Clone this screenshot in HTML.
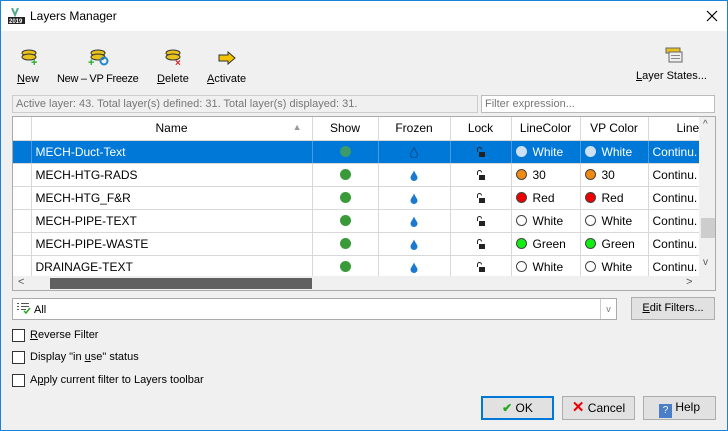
<!DOCTYPE html>
<html><head><style>
*{box-sizing:border-box;margin:0;padding:0}
body{width:728px;height:431px;overflow:hidden;font-family:"Liberation Sans",sans-serif;font-size:12px;color:#000;background:#f0f0f0;position:relative}
.a{position:absolute}
.win{left:0;top:0;width:728px;height:431px;border:1px solid #1883d7}
.title{left:1px;top:1px;width:726px;height:30px;background:#fff}
.tb{font-size:11px;text-align:center}
table{border-collapse:collapse;table-layout:fixed}
td,th{height:23px;border-right:1px solid #d8d8d8;border-bottom:1px solid #d8d8d8;font-weight:normal;white-space:nowrap;overflow:hidden;font-size:12px}
th{background:#fff;text-align:center}
td{padding-left:4px}
.c{text-align:center;padding:0}
td svg{vertical-align:-2px}
tr.sel td{background:#0078d7;color:#fff;border-right-color:#4a9be0}
.dot{display:inline-block;width:11px;height:11px;border-radius:50%;vertical-align:-1px;margin-right:6px;border:1px solid #444}
.g{display:inline-block;width:11px;height:11px;border-radius:50%;background:#3a9a3a;vertical-align:-1px}
.cb{width:13px;height:13px;border:1px solid #333;background:#fff}
.btn{border:1px solid #adadad;background:#e1e1e1;text-align:center;line-height:21px;font-size:12px}
</style></head><body>
<div class="a win"></div>
<div class="a title"></div>
<div class="a" style="left:8px;top:8px;width:17px;height:16px"><svg width="17" height="16"><path d="M4 0l3 7 3-7" stroke="#5a8" stroke-width="2" fill="none"/><rect x="0" y="9" width="17" height="7" fill="#222"/><text x="1" y="15" font-size="6" fill="#fff" font-family="Liberation Sans" font-weight="bold">2019</text></svg></div>
<div class="a" style="left:30px;top:9px;font-size:12px">Layers Manager</div>
<svg class="a" style="left:706px;top:10px" width="12" height="12"><path d="M1 1l10 10M11 1L1 11" stroke="#000" stroke-width="1.2"/></svg>

<svg class="a" style="left:20px;top:48px" width="20" height="18"><ellipse cx="9" cy="5" rx="7" ry="3" fill="#e8c21a" stroke="#333"/><ellipse cx="9" cy="9" rx="7" ry="3" fill="#e8c21a" stroke="#333"/><text x="11" y="18" fill="#2a2" font-size="11" font-weight="bold">+</text></svg>
<div class="a tb" style="left:17px;top:73px"><u>N</u>ew</div>
<svg class="a" style="left:88px;top:48px" width="22" height="18"><ellipse cx="10" cy="5" rx="7" ry="3" fill="#e8c21a" stroke="#333"/><ellipse cx="10" cy="9" rx="7" ry="3" fill="#e8c21a" stroke="#333"/><text x="0" y="18" fill="#2a2" font-size="11" font-weight="bold">+</text><circle cx="16" cy="13" r="3.5" fill="none" stroke="#28c" stroke-width="2"/></svg>
<div class="a tb" style="left:57px;top:73px;letter-spacing:-0.3px">New – VP Freeze</div>
<svg class="a" style="left:164px;top:48px" width="20" height="18"><ellipse cx="9" cy="5" rx="7" ry="3" fill="#e8c21a" stroke="#333"/><ellipse cx="9" cy="9" rx="7" ry="3" fill="#e8c21a" stroke="#333"/><text x="11" y="18" fill="#d22" font-size="10" font-weight="bold">×</text></svg>
<div class="a tb" style="left:157px;top:73px"><u>D</u>elete</div>
<svg class="a" style="left:218px;top:51px" width="19" height="14"><path d="M1 4h9V1l7 6-7 6V10H1z" fill="#f5c400" stroke="#333"/></svg>
<div class="a tb" style="left:207px;top:73px"><u>A</u>ctivate</div>
<svg class="a" style="left:664px;top:47px" width="20" height="16"><rect x="2" y="1" width="14" height="5" fill="#e8c21a" stroke="#666"/><rect x="5" y="5" width="13" height="10" fill="#eee" stroke="#666"/><rect x="7" y="8" width="9" height="1" fill="#888"/><rect x="7" y="11" width="9" height="1" fill="#888"/></svg>
<div class="a tb" style="left:636px;top:70px"><u>L</u>ayer States...</div>

<div class="a" style="left:12px;top:95px;width:466px;height:18px;border:1px solid #ccc;background:#f0f0f0;color:#777;font-size:11px;padding:2px 3px">Active layer: 43. Total layer(s) defined: 31. Total layer(s) displayed: 31.</div>
<div class="a" style="left:481px;top:95px;width:234px;height:18px;border:1px solid #bbb;background:#fff;color:#777;font-size:11px;padding:2px 3px">Filter expression...</div>

<div class="a" style="left:12px;top:116px;width:704px;height:175px;border:1px solid #aaa;background:#fff;overflow:hidden">
<table style="width:686px">
<colgroup><col style="width:18px"><col style="width:281px"><col style="width:66px"><col style="width:72px"><col style="width:61px"><col style="width:69px"><col style="width:68px"><col style="width:51px"></colgroup>
<tr><th></th><th style="position:relative">Name<span style="position:absolute;right:10px;top:5px;color:#999;font-size:9px">▲</span></th><th>Show</th><th>Frozen</th><th>Lock</th><th>LineColor</th><th>VP Color</th><th style="text-align:left;padding-left:28px">LineS</th></tr>
<tr class="sel"><td></td><td>MECH-Duct-Text</td><td class="c"><span class="g" style="background:#3c9a6a"></span></td><td class="c"><svg width="8" height="11"><path d="M4 0.5C2.5 4 0.5 6 0.5 7.5a3.5 3.5 0 007 0C7.5 6 5.5 4 4 0.5z" fill="none" stroke="#0a4f8f"/></svg></td><td class="c"><svg width="9" height="11"><path d="M1.5 5V2.5a2 2 0 014 0" fill="none" stroke="#222"/><rect x="3" y="5" width="6" height="5" fill="#222"/></svg></td><td><span class="dot" style="background:#cfe0f2;border-color:#cfe0f2"></span>White</td><td><span class="dot" style="background:#cfe0f2;border-color:#cfe0f2"></span>White</td><td>Continu.</td></tr>
<tr><td></td><td>MECH-HTG-RADS</td><td class="c"><span class="g"></span></td><td class="c"><svg width="8" height="11"><path d="M4 0.5C2.5 4 0.5 6 0.5 7.5a3.5 3.5 0 007 0C7.5 6 5.5 4 4 0.5z" fill="#1b7ad0"/></svg></td><td class="c"><svg width="9" height="11"><path d="M1.5 5V2.5a2 2 0 014 0" fill="none" stroke="#222"/><rect x="3" y="5" width="6" height="5" fill="#222"/></svg></td><td><span class="dot" style="background:#f08a10"></span>30</td><td><span class="dot" style="background:#f08a10"></span>30</td><td>Continu.</td></tr>
<tr><td></td><td>MECH-HTG_F&amp;R</td><td class="c"><span class="g"></span></td><td class="c"><svg width="8" height="11"><path d="M4 0.5C2.5 4 0.5 6 0.5 7.5a3.5 3.5 0 007 0C7.5 6 5.5 4 4 0.5z" fill="#1b7ad0"/></svg></td><td class="c"><svg width="9" height="11"><path d="M1.5 5V2.5a2 2 0 014 0" fill="none" stroke="#222"/><rect x="3" y="5" width="6" height="5" fill="#222"/></svg></td><td><span class="dot" style="background:#e00"></span>Red</td><td><span class="dot" style="background:#e00"></span>Red</td><td>Continu.</td></tr>
<tr><td></td><td>MECH-PIPE-TEXT</td><td class="c"><span class="g"></span></td><td class="c"><svg width="8" height="11"><path d="M4 0.5C2.5 4 0.5 6 0.5 7.5a3.5 3.5 0 007 0C7.5 6 5.5 4 4 0.5z" fill="#1b7ad0"/></svg></td><td class="c"><svg width="9" height="11"><path d="M1.5 5V2.5a2 2 0 014 0" fill="none" stroke="#222"/><rect x="3" y="5" width="6" height="5" fill="#222"/></svg></td><td><span class="dot" style="background:#fff"></span>White</td><td><span class="dot" style="background:#fff"></span>White</td><td>Continu.</td></tr>
<tr><td></td><td>MECH-PIPE-WASTE</td><td class="c"><span class="g"></span></td><td class="c"><svg width="8" height="11"><path d="M4 0.5C2.5 4 0.5 6 0.5 7.5a3.5 3.5 0 007 0C7.5 6 5.5 4 4 0.5z" fill="#1b7ad0"/></svg></td><td class="c"><svg width="9" height="11"><path d="M1.5 5V2.5a2 2 0 014 0" fill="none" stroke="#222"/><rect x="3" y="5" width="6" height="5" fill="#222"/></svg></td><td><span class="dot" style="background:#1e1"></span>Green</td><td><span class="dot" style="background:#1e1"></span>Green</td><td>Continu.</td></tr>
<tr><td></td><td>DRAINAGE-TEXT</td><td class="c"><span class="g"></span></td><td class="c"><svg width="8" height="11"><path d="M4 0.5C2.5 4 0.5 6 0.5 7.5a3.5 3.5 0 007 0C7.5 6 5.5 4 4 0.5z" fill="#1b7ad0"/></svg></td><td class="c"><svg width="9" height="11"><path d="M1.5 5V2.5a2 2 0 014 0" fill="none" stroke="#222"/><rect x="3" y="5" width="6" height="5" fill="#222"/></svg></td><td><span class="dot" style="background:#fff"></span>White</td><td><span class="dot" style="background:#fff"></span>White</td><td>Continu.</td></tr>
</table>
<div class="a" style="left:0;top:159px;width:686px;height:15px;background:#f0f0f0"></div>
<div class="a" style="left:5px;top:159px;font-size:11px;color:#555">&lt;</div>
<div class="a" style="left:37px;top:161px;width:262px;height:11px;background:#606060"></div>
<div class="a" style="left:686px;top:0;width:17px;height:174px;background:#f0f0f0"></div>
<div class="a" style="left:690px;top:2px;font-size:10px;color:#555">^</div>
<div class="a" style="left:688px;top:101px;width:14px;height:20px;background:#cdcdcd"></div>
<div class="a" style="left:690px;top:140px;font-size:10px;color:#555">v</div>
<div class="a" style="left:673px;top:159px;font-size:11px;color:#555">&gt;</div>
</div>

<div class="a" style="left:12px;top:298px;width:605px;height:22px;border:1px solid #aaa;background:#fff"></div>
<svg class="a" style="left:17px;top:302px" width="14" height="12"><path d="M0 1.5h2M4 1.5h8M0 4.5h2M4 4.5h8M0 7.5h2M4 7.5h5" stroke="#555"/><path d="M7 9l2 2 4-5" stroke="#2a2" stroke-width="1.5" fill="none"/></svg>
<div class="a" style="left:34px;top:304px;font-size:11px">All</div>
<div class="a" style="left:600px;top:299px;width:16px;height:20px;border-left:1px solid #ccc;color:#777;font-size:9px;text-align:center;line-height:20px">v</div>
<div class="a btn" style="left:631px;top:297px;width:84px;height:23px;font-size:11px"><u>E</u>dit Filters...</div>

<div class="a cb" style="left:12px;top:329px"></div><div class="a" style="left:30px;top:329px;font-size:11px"><u>R</u>everse Filter</div>
<div class="a cb" style="left:12px;top:351px"></div><div class="a" style="left:30px;top:351px;font-size:11px">Display "in <u>u</u>se" status</div>
<div class="a cb" style="left:12px;top:374px"></div><div class="a" style="left:30px;top:374px;font-size:11px">A<u>p</u>ply current filter to Layers toolbar</div>

<div class="a btn" style="left:481px;top:396px;width:73px;height:24px;border:2px solid #0078d7;line-height:20px"><span style="color:#2a2;font-weight:bold">✔</span> OK</div>
<div class="a btn" style="left:562px;top:396px;width:73px;height:24px"><span style="color:#e00;font-weight:bold;font-size:15px">✕</span> Cancel</div>
<div class="a btn" style="left:643px;top:396px;width:73px;height:24px"><span style="display:inline-block;width:13px;height:14px;background:#4a7fc8;color:#fff;font-size:10px;line-height:14px;vertical-align:-2px">?</span> Help</div>
</body></html>
